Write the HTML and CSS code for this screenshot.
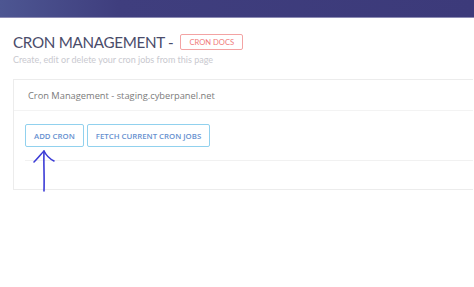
FILE: index.html
```html
<!DOCTYPE html>
<html lang="en">
<head>
    <meta charset="UTF-8">
    <title>Cron Management</title>
    <link rel="stylesheet" href="styles.css">
</head>
<body>
    <div class="top-bar"></div>
    <div class="page">
        <div class="page-title">
            <h2>CRON MANAGEMENT - <a class="docs-badge" href="#">CRON DOCS</a></h2>
            <p>Create, edit or delete your cron jobs from this page</p>
        </div>
        <div class="panel">
            <div class="panel-heading">Cron Management - staging.cyberpanel.net</div>
            <div class="panel-body">
                <div class="actions">
                    <button class="btn">ADD CRON</button>
                    <button class="btn">FETCH CURRENT CRON JOBS</button>
                    <svg class="arrow" width="24" height="44" viewBox="0 0 24 44" fill="none" stroke="#3b3bd6" stroke-width="1.6" stroke-linecap="round" stroke-linejoin="round">
                        <path d="M12 2 C11.5 14 12.5 28 12 42"></path>
                        <path d="M2 13 C6 9 9 5 12 2 C14 6 18 10 22 12"></path>
                    </svg>
                </div>
                <div class="divider"></div>
            </div>
        </div>
    </div>
</body>
</html>
```

FILE: styles.css
```css
* {
    margin: 0;
    padding: 0;
    box-sizing: border-box;
}
body {
    width: 474px;
    height: 287px;
    overflow: hidden;
    background: #ffffff;
    font-family: 'Open Sans', sans-serif;
}
.top-bar {
    height: 18px;
    background: linear-gradient(to right, #4d5692 0%, #3f3e7e 25%, #3c3a7a 100%);
    border-bottom: 1px solid #8c8bb4;
}
.page {
    padding: 14px 0 0 13px;
}
.page-title h2 {
    font-family: 'Lato', sans-serif;
    font-weight: 400;
    font-size: 15.2px;
    color: #4a4c6a;
    letter-spacing: -0.3px;
    display: flex;
    align-items: center;
    gap: 4px;
    line-height: 20px;
}
.docs-badge {
    display: inline-block;
    font-size: 7.6px;
    letter-spacing: 0;
    color: #f07a7a;
    text-decoration: none;
    border: 1.5px solid #f3a3a3;
    border-radius: 2px;
    padding: 2px 8px;
    line-height: 10px;
    margin-left: 3px;
}
.page-title p {
    margin-top: 2px;
    font-family: 'Lato', sans-serif;
    font-size: 9px;
    color: #c9c9cf;
}
.panel {
    margin-top: 14px;
    width: 460px;
    height: 111px;
    border: 1px solid #ececec;
    border-right: none;
    background: #ffffff;
}
.panel-heading {
    height: 31px;
    padding: 9px 0 0 14px;
    font-size: 9.3px;
    color: #7b7b7b;
    border-bottom: 1px solid #f3f3f3;
}
.panel-body {
    padding: 13px 0 0 11px;
}
.actions {
    position: relative;
    display: flex;
    gap: 3px;
}
.btn {
    height: 23px;
    padding: 0 8px;
    background: #ffffff;
    border: 1.5px solid #91d1ee;
    border-radius: 2px;
    font-family: 'Open Sans', sans-serif;
    font-size: 7.8px;
    font-weight: 600;
    color: #6690cf;
    cursor: pointer;
}
.arrow {
    position: absolute;
    left: 7px;
    top: 25px;
}
.divider {
    margin-top: 13px;
    border-top: 1px solid #f1f1f1;
}
```
